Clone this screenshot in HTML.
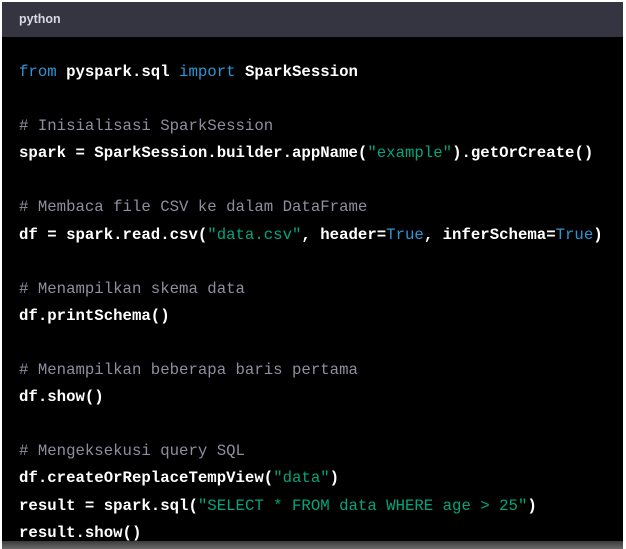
<!DOCTYPE html>
<html><head><style>
html,body{margin:0;padding:0;width:626px;height:549px;background:#fff;overflow:hidden}
.box{position:absolute;left:2px;top:2px;width:621px;height:547px;background:#000;overflow:hidden}
.hd{height:35px;background:#343541;color:#d9d9e3;font:bold 12.5px "Liberation Sans",sans-serif;line-height:35px;padding-left:17px}
pre{position:absolute;left:17px;top:57px;margin:0;font:15.7px/27.1px "Liberation Mono",monospace;color:#fff;font-weight:bold}
.k{color:#2e95d3;font-weight:normal}.s{color:#00a67d;font-weight:normal}.c{color:#8e8ea0;font-weight:normal}
.bot{position:absolute;left:0;right:0;bottom:0;height:8px;background:linear-gradient(#3a3a3a,#6a6a6a)}
</style></head><body><div class="box"><div class="hd">python</div>
<pre><span class="k">from</span> pyspark.sql <span class="k">import</span> SparkSession

<span class="c"># Inisialisasi SparkSession</span>
spark = SparkSession.builder.appName(<span class="s">"example"</span>).getOrCreate()

<span class="c"># Membaca file CSV ke dalam DataFrame</span>
df = spark.read.csv(<span class="s">"data.csv"</span>, header=<span class="k">True</span>, inferSchema=<span class="k">True</span>)

<span class="c"># Menampilkan skema data</span>
df.printSchema()

<span class="c"># Menampilkan beberapa baris pertama</span>
df.show()

<span class="c"># Mengeksekusi query SQL</span>
df.createOrReplaceTempView(<span class="s">"data"</span>)
result = spark.sql(<span class="s">"SELECT * FROM data WHERE age &gt; 25"</span>)
result.show()</pre>
<div class="bot"></div></div></body></html>
